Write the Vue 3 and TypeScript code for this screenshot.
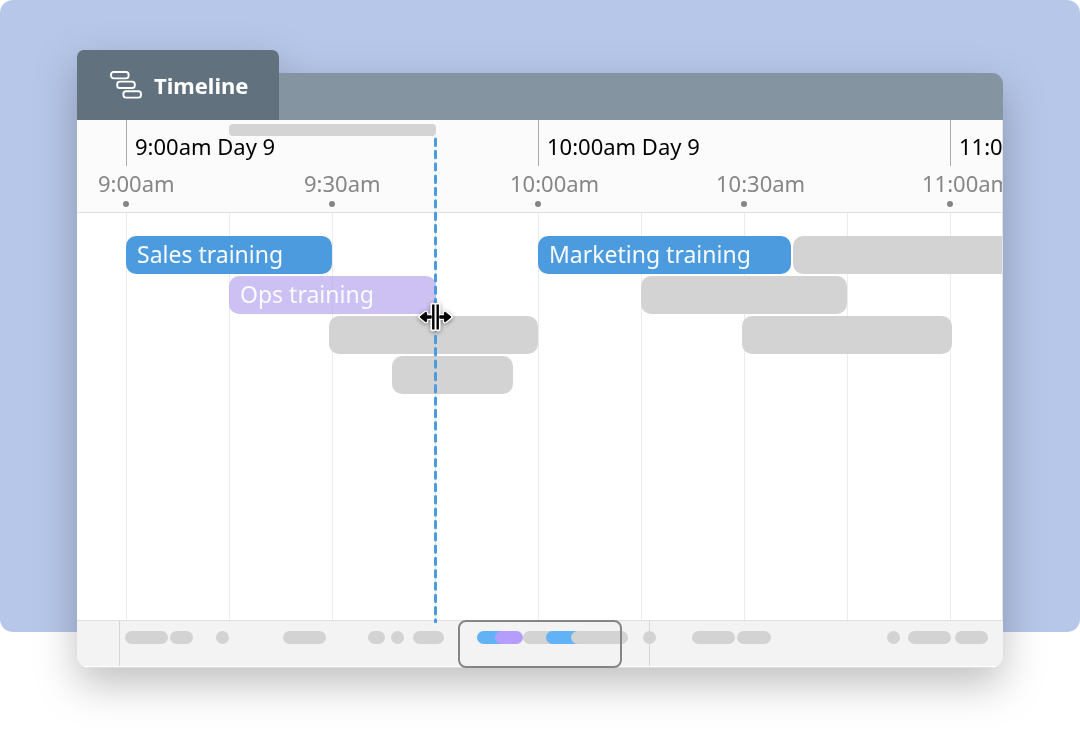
<script setup lang="ts">
type Tone = 'blue' | 'violet' | 'grey'

interface Task {
  start: number
  end: number
  tone: Tone
  label?: string
}

// Horizontal scale of the timeline, in minutes after 9:00am.
const HOUR_WIDTH = 412
const ORIGIN = 49
const at = (minutes: number): number => Math.round(ORIGIN + (minutes * HOUR_WIDTH) / 60)
const place = (minutes: number) => ({ left: `${at(minutes)}px` })
const span = (start: number, end: number) => ({
  left: `${at(start)}px`,
  width: `${at(end) - at(start)}px`,
})

const hours = [
  { minute: 0, label: '9:00am Day 9' },
  { minute: 60, label: '10:00am Day 9' },
  { minute: 120, label: '11:00am Day 9' },
]

const halfHours = [
  { minute: 0, label: '9:00am' },
  { minute: 30, label: '9:30am' },
  { minute: 60, label: '10:00am' },
  { minute: 90, label: '10:30am' },
  { minute: 120, label: '11:00am' },
]

const gridLines = [0, 15, 30, 45, 60, 75, 90, 105, 120]

const lanes: Task[][] = [
  [
    { start: 0, end: 30, tone: 'blue', label: 'Sales training' },
    { start: 60, end: 96.9, tone: 'blue', label: 'Marketing training' },
    { start: 97.2, end: 140, tone: 'grey' },
  ],
  [
    { start: 15, end: 45.2, tone: 'violet', label: 'Ops training' },
    { start: 75, end: 105, tone: 'grey' },
  ],
  [
    { start: 29.5, end: 60, tone: 'grey' },
    { start: 89.7, end: 120.3, tone: 'grey' },
  ],
  [{ start: 38.7, end: 56.4, tone: 'grey' }],
]

// The overview strip spreads its own units over the full width.
const OVERVIEW_UNITS = 926
const share = (units: number): string => `${(units / OVERVIEW_UNITS) * 100}%`
const overviewSpan = (start: number, end: number) => ({
  left: share(start),
  width: share(end - start),
})

const days = [42, 572]

const overview: Task[] = [
  { start: 48, end: 91, tone: 'grey' },
  { start: 93, end: 116, tone: 'grey' },
  { start: 139, end: 152, tone: 'grey' },
  { start: 206, end: 249, tone: 'grey' },
  { start: 291, end: 308, tone: 'grey' },
  { start: 314, end: 327, tone: 'grey' },
  { start: 336, end: 367, tone: 'grey' },
  { start: 400, end: 430, tone: 'blue' },
  { start: 418, end: 446, tone: 'violet' },
  { start: 446, end: 480, tone: 'grey' },
  { start: 469, end: 506, tone: 'blue' },
  { start: 494, end: 551, tone: 'grey' },
  { start: 566, end: 579, tone: 'grey' },
  { start: 615, end: 658, tone: 'grey' },
  { start: 660, end: 694, tone: 'grey' },
  { start: 810, end: 823, tone: 'grey' },
  { start: 831, end: 874, tone: 'grey' },
  { start: 878, end: 911, tone: 'grey' },
]
</script>

<template>
  <main class="stage">
    <section class="window" aria-label="Timeline">
      <header class="titlebar">
        <button class="tab" type="button">
          <svg class="tab-icon" viewBox="0 0 32 28" aria-hidden="true">
            <rect x="1" y="1" width="17.6" height="6.4" rx="2.6" />
            <rect x="7.2" y="10.6" width="17.6" height="6.4" rx="2.6" />
            <rect x="13.4" y="20.2" width="17.6" height="6.4" rx="2.6" />
          </svg>
          <span>Timeline</span>
        </button>
        <div class="bar"></div>
      </header>

      <div class="panel">
        <div class="timeline">
          <div class="ruler">
            <div class="hours">
              <div v-for="h in hours" :key="h.minute" class="hour" :style="place(h.minute)">
                {{ h.label }}
              </div>
            </div>
            <div class="halves">
              <div v-for="h in halfHours" :key="h.minute" class="half" :style="place(h.minute)">
                <span class="half-label">{{ h.label }}</span>
                <i class="dot"></i>
              </div>
            </div>
            <div class="range" :style="span(15, 45.2)"></div>
          </div>

          <div class="canvas">
            <i v-for="m in gridLines" :key="m" class="grid-line" :style="place(m)"></i>
            <div class="lanes">
              <div v-for="(lane, i) in lanes" :key="i" class="lane">
                <div
                  v-for="task in lane"
                  :key="task.start"
                  class="task"
                  :class="task.tone"
                  :style="span(task.start, task.end)"
                >
                  {{ task.label }}
                </div>
              </div>
            </div>
          </div>

          <svg class="guide" :style="place(45)" aria-hidden="true">
            <line x1="3.5" y1="2" x2="3.5" y2="100%" />
          </svg>
          <svg class="cursor" :style="place(45)" viewBox="0 0 40 36" aria-hidden="true">
            <g class="cursor-halo">
              <path d="M5 18l5.4-4.6q1.2-.6 1.2.6v2.8h4.6v2.4h-4.6V22q0 1.2-1.2.6zM36 18l-5.4-4.6q-1.2-.6-1.2.6v2.8h-4.6v2.4h4.6V22q0 1.2 1.2.6z" />
              <path d="M17.1 5.4h2.4v25.2h-2.4zM21.5 5.4h2.4v25.2h-2.4z" />
            </g>
            <g class="cursor-shape">
              <path d="M5 18l5.4-4.6q1.2-.6 1.2.6v2.8h4.6v2.4h-4.6V22q0 1.2-1.2.6zM36 18l-5.4-4.6q-1.2-.6-1.2.6v2.8h-4.6v2.4h4.6V22q0 1.2 1.2.6z" />
            </g>
            <path d="M17.1 5.4h2.4v25.2h-2.4zM21.5 5.4h2.4v25.2h-2.4z" />
          </svg>
        </div>

        <div class="overview">
          <i v-for="d in days" :key="d" class="day-line" :style="{ left: share(d) }"></i>
          <i
            v-for="task in overview"
            :key="task.start"
            class="pill"
            :class="task.tone"
            :style="overviewSpan(task.start, task.end)"
          ></i>
          <button
            class="viewport"
            type="button"
            aria-label="Visible range"
            :style="overviewSpan(381, 545)"
          ></button>
        </div>
      </div>
    </section>
  </main>
</template>

<style>
body {
  margin: 0;
  background: #fff;
}
</style>

<style scoped>
.stage {
  box-sizing: border-box;
  display: flow-root;
  margin-bottom: 105px;
  padding: 50px 77px 0;
  height: 632px;
  border-radius: 13px;
  background: #b7c7e9;
  font-family: 'Noto Sans', 'Open Sans', sans-serif;
  font-size: 22px;
  line-height: 30px;
}

.window {
  filter: drop-shadow(0 16px 20px rgba(0, 0, 0, 0.25));
}

.titlebar {
  display: flex;
  align-items: flex-end;
}

.tab {
  display: flex;
  align-items: center;
  gap: 12px;
  height: 70px;
  padding: 0 31px 0 33px;
  border: 0;
  border-radius: 7px 7px 0 0;
  background: #61727e;
  color: #fff;
  font: inherit;
  font-weight: 700;
}

.tab-icon {
  width: 32px;
  height: 28px;
  fill: none;
  stroke: #fff;
  stroke-width: 1.9;
}

.bar {
  flex: 1;
  height: 47px;
  border-radius: 0 11px 0 0;
  background: #8594a1;
}

.panel {
  overflow: hidden;
  border-radius: 0 0 13px 13px;
  background: #fff;
}

.timeline {
  position: relative;
  z-index: 1;
  overflow-x: clip;
  border-right: 1px solid #e2e4e8;
}

.ruler {
  position: relative;
  border-bottom: 1px solid #e0e0e0;
  background: #fbfbfb;
}

.hours {
  position: relative;
  height: 46px;
}

.hour {
  position: absolute;
  top: 0;
  box-sizing: border-box;
  height: 46px;
  padding: 11px 0 0 8px;
  border-left: 1px solid #aaa;
  color: #000;
  white-space: nowrap;
}

.halves {
  position: relative;
  height: 46px;
}

.half {
  position: absolute;
  top: 2px;
  color: #868686;
  white-space: nowrap;
}

.half-label {
  display: block;
  margin-left: -28px;
}

.dot {
  display: block;
  width: 6px;
  height: 6px;
  margin: 3px 0 0 -3px;
  border-radius: 50%;
  background: #858585;
}

.range {
  position: absolute;
  top: 4px;
  height: 12px;
  border-radius: 4px;
  background: #d4d4d4;
}

.canvas {
  position: relative;
  min-height: 407px;
}

.grid-line {
  position: absolute;
  top: 0;
  bottom: 0;
  width: 1px;
  background: #ebebeb;
}

.lanes {
  display: grid;
  gap: 2px;
  padding-top: 23px;
}

.lane {
  position: relative;
  height: 38px;
}

.task {
  position: absolute;
  top: 0;
  box-sizing: border-box;
  height: 38px;
  padding-left: 11px;
  border-radius: 10px;
  color: #f8fbff;
  font-size: 23px;
  line-height: 36px;
  white-space: nowrap;
}

.task.blue {
  background: #4b9bde;
}

.task.violet {
  background: rgba(184, 165, 236, 0.7);
}

.grey {
  background: #d3d3d3;
}

.guide {
  position: absolute;
  top: 17px;
  width: 7px;
  height: calc(100% - 14px);
  margin-left: -3px;
}

.guide line {
  stroke: #4b9bde;
  stroke-width: 3;
  stroke-linecap: round;
  stroke-dasharray: 6.4 5.93;
}

.cursor {
  position: absolute;
  top: 179px;
  width: 40px;
  height: 36px;
  margin-left: -20px;
  overflow: visible;
  filter: drop-shadow(0 1px 2px rgba(0, 0, 0, 0.4));
}

.cursor-halo {
  fill: #fff;
  stroke: #fff;
  stroke-width: 3.4;
  stroke-linejoin: round;
}

.cursor-shape {
  stroke: #000;
  stroke-width: 1;
  stroke-linejoin: round;
}

.overview {
  position: relative;
  box-sizing: border-box;
  height: 48px;
  border-top: 1px solid #e0e0e0;
  background: #f3f3f3;
  box-shadow: inset 0 -1px #dcdcdc, inset 0 -2px #fff;
}

.day-line {
  position: absolute;
  top: 0;
  bottom: 2px;
  width: 1px;
  background: #d6d6d6;
}

.pill {
  position: absolute;
  top: 10px;
  height: 13px;
  border-radius: 7px;
}

.pill.blue {
  background: #62b2f6;
}

.pill.violet {
  background: #b59dfd;
}

.viewport {
  position: absolute;
  top: -1px;
  bottom: 0;
  box-sizing: border-box;
  padding: 0;
  border: 2px solid #858585;
  border-radius: 8px;
  background: transparent;
}
</style>
